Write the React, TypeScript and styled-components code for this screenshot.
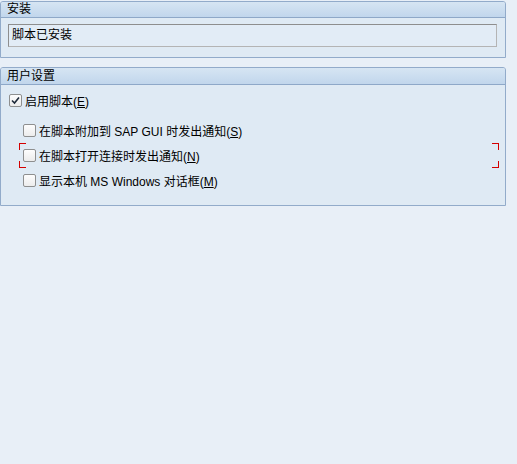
import React from "react";
import styled, { createGlobalStyle } from "styled-components";

const GlobalStyle = createGlobalStyle`
    html, body {
        margin: 0;
        padding: 0;
        background: #e8eff7;
    }
    body {
        font-family: "Liberation Sans", "Noto Sans CJK SC", sans-serif;
        font-size: 12px;
        color: #000;
    }
`;

const Page = styled.div`
    width: 517px;
    height: 464px;
    box-sizing: border-box;
    padding: 1px 11px 0 0;
    display: flex;
    flex-direction: column;
    gap: 9px;
`;

const Group = styled.section`
    border: 1px solid #92abca;
    border-radius: 3px 3px 0 0;
    background: #dfeaf4;
`;

const GroupHeader = styled.div<{ $h: number }>`
    height: ${(p) => p.$h}px;
    line-height: ${(p) => p.$h}px;
    padding-left: 6px;
    background: linear-gradient(#d6e5f3, #c1d6ec);
    border-bottom: 1px solid #8ea8c8;
    border-radius: 2px 2px 0 0;
`;

const GroupBody = styled.div<{ $pad: string }>`
    padding: ${(p) => p.$pad};
    display: flex;
    flex-direction: column;
`;

const TextBox = styled.div`
    height: 21px;
    line-height: 21px;
    padding-left: 3px;
    background: #e2ecf6;
    border: 1px solid #b4b4b4;
    border-top-color: #8e8e8e;
    border-left-color: #8e8e8e;
`;

const Row = styled.label<{ $indent: number; $h: number }>`
    position: relative;
    display: flex;
    align-items: center;
    gap: 3px;
    height: ${(p) => p.$h}px;
    padding-left: ${(p) => p.$indent}px;
`;

const Box = styled.span`
    width: 11px;
    height: 11px;
    border: 1px solid #8e8f8f;
    border-radius: 2px;
    background: linear-gradient(#fdfdfd, #ececec);
    display: flex;
    align-items: center;
    justify-content: center;
`;

const Key = styled.span`
    text-decoration: underline;
`;

const Corner = styled.span<{ $pos: "tl" | "tr" | "bl" | "br" }>`
    position: absolute;
    width: 6px;
    height: 6px;
    border: 0 solid #d40000;
    ${(p) => (p.$pos[0] === "t" ? "top: 0; border-top-width: 1px;" : "bottom: 0; border-bottom-width: 1px;")}
    ${(p) => (p.$pos[1] === "l" ? "left: 18px; border-left-width: 1px;" : "right: 6px; border-right-width: 1px;")}
`;

const Check: React.FC<{ checked?: boolean }> = ({ checked }) => (
    <Box>
        {checked ? (
            <svg width="9" height="9" viewBox="0 0 9 9">
                <path d="M1 4.5 L3.5 7 L8 1.5" fill="none" stroke="#1e2a3a" strokeWidth="1.6" />
            </svg>
        ) : null}
    </Box>
);

const App: React.FC = () => {
    return (
        <>
            <GlobalStyle />
            <Page>
                <Group>
                    <GroupHeader $h={15}>安装</GroupHeader>
                    <GroupBody $pad="6px 8px 10px 7px">
                        <TextBox>脚本已安装</TextBox>
                    </GroupBody>
                </Group>
                <Group>
                    <GroupHeader $h={16}>用户设置</GroupHeader>
                    <GroupBody $pad="3px 0 12px 0">
                        <Row $indent={8} $h={24} style={{ marginBottom: 6 }}>
                            <Check checked />
                            <span>
                                启用脚本(<Key>E</Key>)
                            </span>
                        </Row>
                        <Row $indent={22} $h={25}>
                            <Check />
                            <span>
                                在脚本附加到 SAP GUI 时发出通知(<Key>S</Key>)
                            </span>
                        </Row>
                        <Row $indent={22} $h={25}>
                            <Corner $pos="tl" />
                            <Corner $pos="tr" />
                            <Corner $pos="bl" />
                            <Corner $pos="br" />
                            <Check />
                            <span>
                                在脚本打开连接时发出通知(<Key>N</Key>)
                            </span>
                        </Row>
                        <Row $indent={22} $h={25}>
                            <Check />
                            <span>
                                显示本机 MS Windows 对话框(<Key>M</Key>)
                            </span>
                        </Row>
                    </GroupBody>
                </Group>
            </Page>
        </>
    );
};

export default App;
